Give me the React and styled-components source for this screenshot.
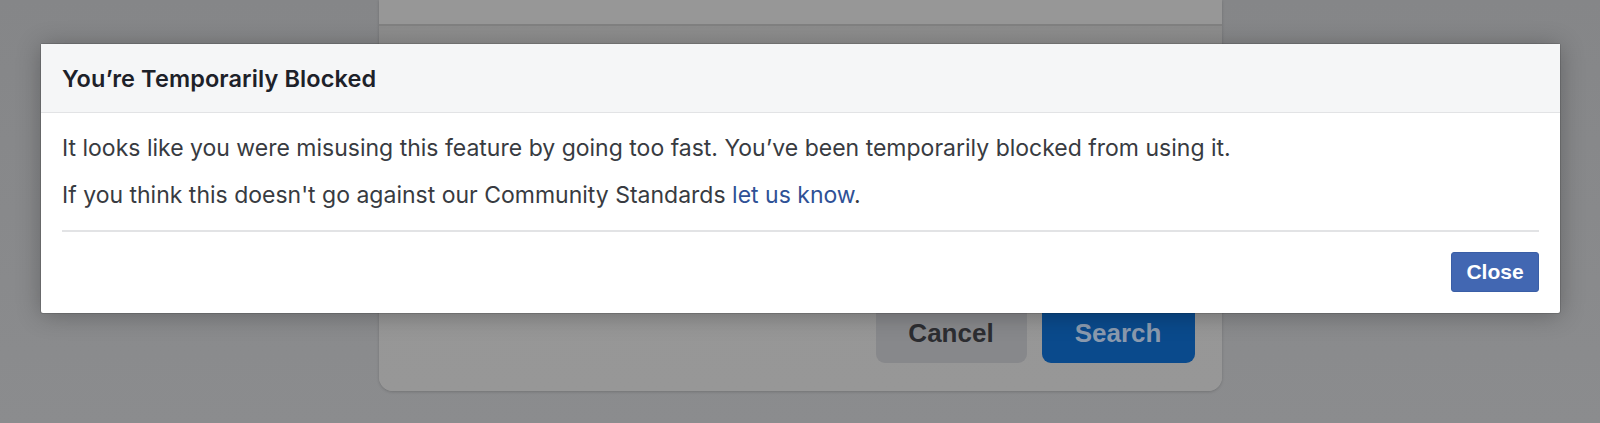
import styled, { createGlobalStyle } from 'styled-components';

const GlobalStyle = createGlobalStyle`
  html, body {
    margin: 0;
    padding: 0;
    height: 423px;
    overflow: hidden;
    background: #898a8c;
  }
  * {
    box-sizing: border-box;
  }
`;

const Stage = styled.div`
  position: relative;
  width: 1600px;
  height: 423px;
  background: linear-gradient(#858688, #8b8c8e);
  font-family: Inter, 'Liberation Sans', sans-serif;
`;

// the dimmed dialog sitting behind the block notice
const BackPanel = styled.div`
  width: 843px;
  height: 391px;
  margin: 0 auto;
  background: #979797;
  border-radius: 0 0 14px 14px;
  box-shadow: 0 1px 3px rgba(0, 0, 0, 0.18);
  display: flex;
  flex-direction: column;
`;

const PanelTop = styled.div`
  height: 26px;
  border-bottom: 2px solid #818181;
  flex-shrink: 0;
`;

const PanelBody = styled.div`
  flex: 1;
  background: linear-gradient(#8c8c8c 0px, #959595 40px, #979797 100%);
  border-radius: 0 0 14px 14px;
  display: flex;
  align-items: flex-end;
  justify-content: flex-end;
  gap: 15px;
  padding: 0 27px 28px;
`;

const PanelButton = styled.div`
  width: ${(p) => (p.$primary ? '153px' : '151px')};
  height: 60px;
  border-radius: 9px;
  background: ${(p) => (p.$primary ? '#0a4a8c' : '#87888b')};
  color: ${(p) => (p.$primary ? '#8b9aae' : '#2c2d31')};
  font-family: 'Liberation Sans', Inter, sans-serif;
  font-weight: 700;
  font-size: 26px;
  display: flex;
  align-items: flex-end;
  justify-content: center;
  padding-bottom: 14px;
`;

const Modal = styled.div`
  position: absolute;
  top: 44px;
  left: 41px;
  width: 1519px;
  background: #fff;
  box-shadow: 0 2px 24px rgba(0, 0, 0, 0.28), 0 0 0 1px rgba(0, 0, 0, 0.12);
  border-radius: 2px;
`;

const ModalHeader = styled.div`
  height: 69px;
  background: #f5f6f7;
  border-bottom: 1px solid #e2e3e5;
  display: flex;
  align-items: center;
  padding: 0 21px;
`;

const Title = styled.h1`
  margin: 0;
  font-size: 23.5px;
  font-weight: 600;
  color: #1d2129;
  letter-spacing: 0.1px;
`;

const ModalBody = styled.div`
  padding: 23px 21px 0;
`;

const Text = styled.p`
  margin: 0 0 ${(p) => (p.$last ? '0' : '23px')};
  font-size: 23px;
  line-height: 24px;
  color: #383b41;
`;

const Link = styled.a`
  color: #2f5196;
  text-decoration: none;
`;

const Divider = styled.hr`
  margin: 23px 0 0;
  border: 0;
  border-top: 2px solid #e2e3e5;
`;

const ModalFooter = styled.div`
  display: flex;
  justify-content: flex-end;
  padding: 20px 21px 21px;
`;

const CloseButton = styled.button`
  width: 88px;
  height: 40px;
  background: #4267b2;
  border: 1px solid #3a5ea6;
  border-radius: 3px;
  color: #fff;
  font-family: 'Liberation Sans', Inter, sans-serif;
  font-weight: 700;
  font-size: 21px;
  padding: 0;
  cursor: pointer;
`;

export default function App() {
  return (
    <Stage>
      <GlobalStyle />
      <BackPanel>
        <PanelTop />
        <PanelBody>
          <PanelButton>Cancel</PanelButton>
          <PanelButton $primary>Search</PanelButton>
        </PanelBody>
      </BackPanel>
      <Modal>
        <ModalHeader>
          <Title>You’re Temporarily Blocked</Title>
        </ModalHeader>
        <ModalBody>
          <Text>
            It looks like you were misusing this feature by going too fast. You’ve been temporarily blocked from using it.
          </Text>
          <Text $last>
            If you think this doesn't go against our Community Standards <Link href="#">let us know</Link>.
          </Text>
          <Divider />
        </ModalBody>
        <ModalFooter>
          <CloseButton>Close</CloseButton>
        </ModalFooter>
      </Modal>
    </Stage>
  );
}
